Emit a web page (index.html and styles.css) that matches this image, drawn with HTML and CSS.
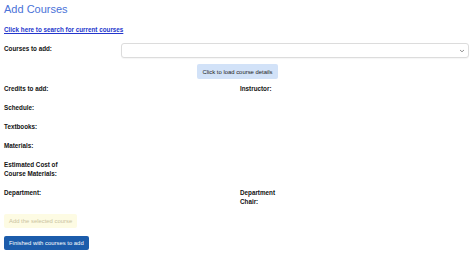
FILE: index.html
```html
<!DOCTYPE html>
<html lang="en">
<head>
<meta charset="utf-8">
<title>Add Courses</title>
<link rel="stylesheet" href="styles.css">
</head>
<body>
<div class="page">
  <h1 class="title">Add Courses</h1>
  <a class="search-link" href="#">Click here to search for current courses</a>
  <div class="course-row">
    <label class="course-label">Courses to add:</label>
    <div class="select">
      <svg class="chev" width="6" height="4" viewBox="0 0 6 4"><path d="M1 1 L3 2.8 L5 1" fill="none" stroke="#777" stroke-width="0.8"/></svg>
    </div>
  </div>
  <div class="load-wrap"><button class="btn-load">Click to load course details</button></div>
  <div class="details">
    <div class="field"><span class="lbl">Credits to add:</span><span class="val"></span></div>
    <div class="field right"><span class="lbl">Instructor:</span><span class="val"></span></div>
    <div class="field full"><span class="lbl">Schedule:</span><span class="val"></span></div>
    <div class="field full"><span class="lbl">Textbooks:</span><span class="val"></span></div>
    <div class="field full"><span class="lbl">Materials:</span><span class="val"></span></div>
    <div class="field full"><span class="lbl">Estimated Cost of Course Materials:</span><span class="val"></span></div>
    <div class="field"><span class="lbl">Department:</span><span class="val"></span></div>
    <div class="field right"><span class="lbl">Department Chair:</span><span class="val"></span></div>
  </div>
  <div class="actions">
    <button class="btn-add" disabled>Add the selected course</button>
    <button class="btn-finish">Finished with courses to add</button>
  </div>
</div>
</body>
</html>
```

FILE: styles.css
```css
html, body {
  margin: 0;
  padding: 0;
  background: #ffffff;
}
body {
  font-family: "Liberation Sans", Arial, sans-serif;
  color: #111;
}
.page {
  padding: 2px 5px 0 4px;
}
.title {
  margin: 0;
  font-size: 11px;
  line-height: 14px;
  font-weight: normal;
  color: #4a72d8;
}
.search-link {
  display: block;
  margin-top: 10px;
  font-size: 6.3px;
  line-height: 8px;
  font-weight: bold;
  color: #2436cc;
  text-decoration: underline;
}
.course-row {
  display: flex;
  align-items: flex-start;
  margin-top: 9px;
}
.course-label {
  width: 117px;
  flex: none;
  font-size: 6.3px;
  font-weight: bold;
  line-height: 9px;
  padding-top: 1px;
}
.select {
  flex: 1;
  height: 13px;
  border: 1px solid #dcdcdc;
  border-radius: 3px;
  background: #fff;
  box-shadow: 0 1px 1px rgba(0,0,0,0.04);
  display: flex;
  align-items: center;
  justify-content: flex-end;
  padding-right: 3px;
}
.load-wrap {
  display: flex;
  justify-content: center;
  margin-top: 6px;
  padding-left: 2px;
}
.btn-load {
  font-family: "Liberation Sans", Arial, sans-serif;
  font-size: 5.9px;
  line-height: 8px;
  height: 15px;
  padding: 0 5px;
  border: none;
  border-radius: 2px;
  background: #d2e2f8;
  color: #222;
}
.details {
  display: grid;
  grid-template-columns: 236px 1fr;
  row-gap: 10px;
  margin-top: 5px;
}
.field {
  display: flex;
  font-size: 6.3px;
  font-weight: bold;
  line-height: 9px;
}
.field.full {
  grid-column: 1 / 3;
}
.lbl {
  width: 55px;
  flex: none;
}
.field.right .lbl {
  width: 45px;
}
.actions {
  display: flex;
  flex-direction: column;
  align-items: flex-start;
  gap: 8px;
  margin-top: 8px;
}
.actions button {
  font-family: "Liberation Sans", Arial, sans-serif;
  font-size: 5.9px;
  line-height: 8px;
  height: 14px;
  padding: 0 5px;
  border: none;
  border-radius: 2px;
}
.btn-add {
  background: #fdfbe3;
  color: #cac39f;
}
.btn-finish {
  background: #1c5cab;
  color: #ffffff;
}
```
